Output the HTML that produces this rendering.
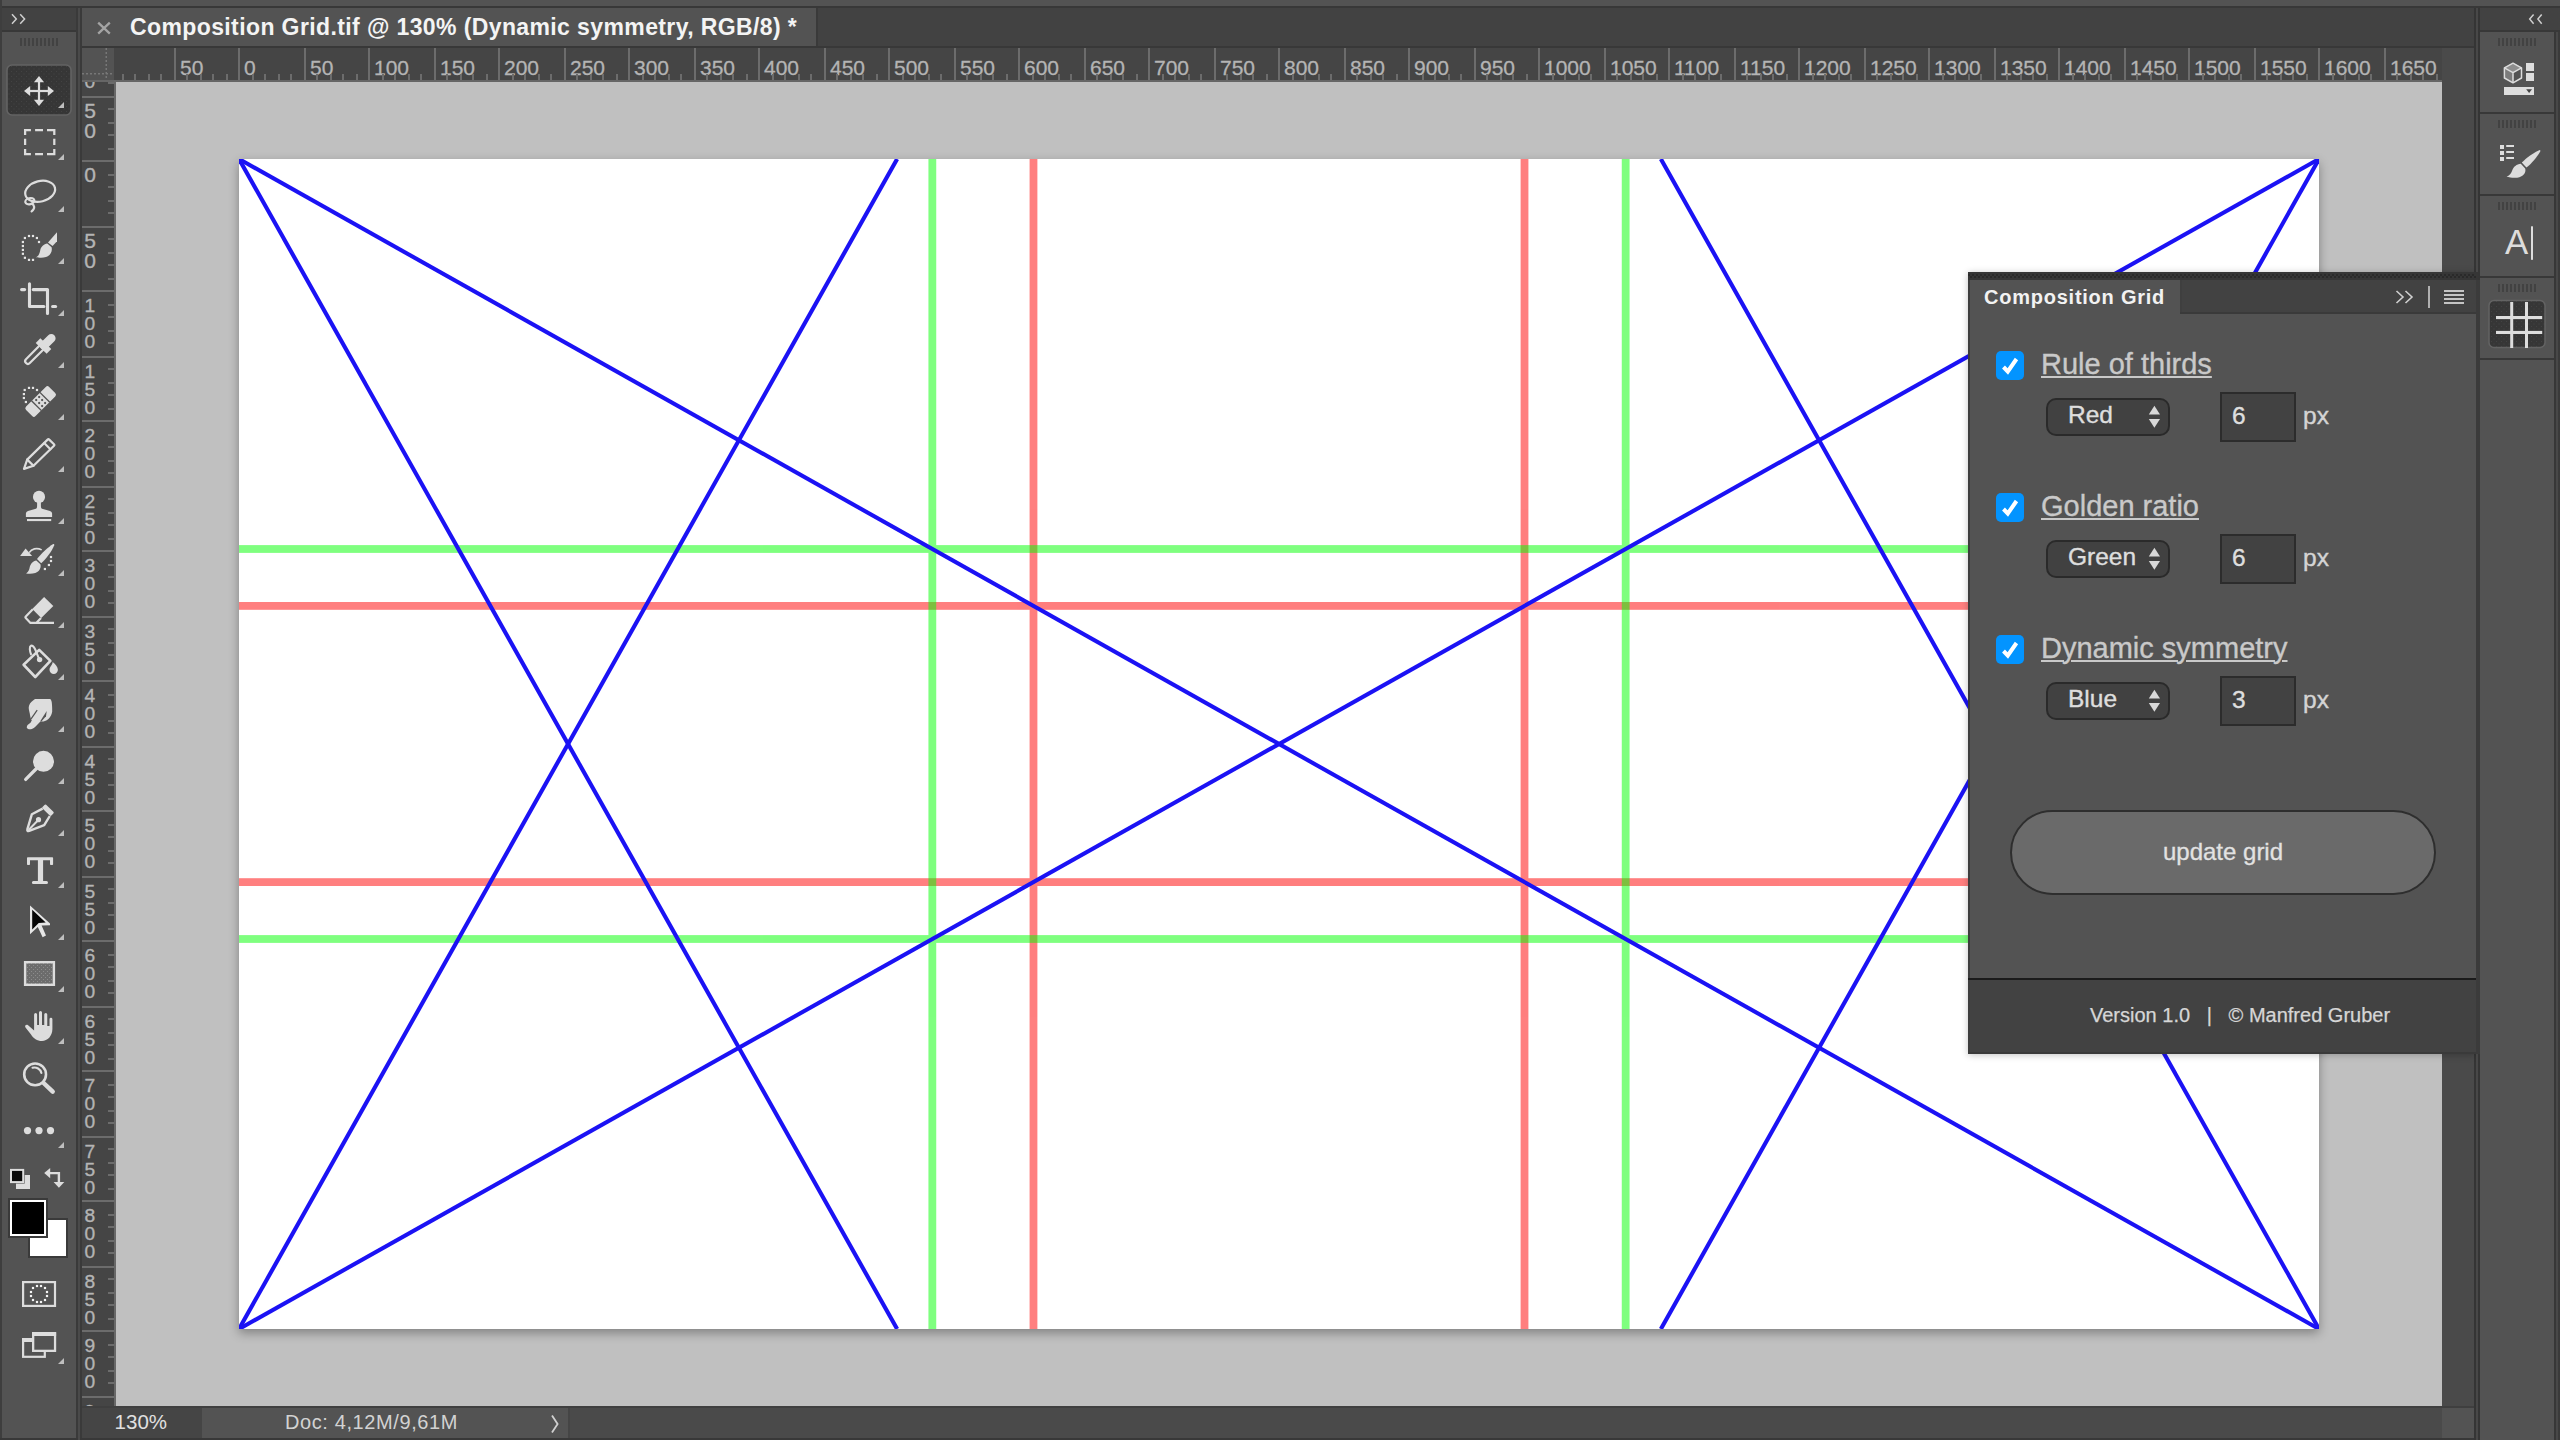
<!DOCTYPE html><html><head><meta charset="utf-8"><title>Composition Grid</title><style>
html,body{margin:0;padding:0;}
body{width:2560px;height:1440px;overflow:hidden;background:#535353;position:relative;font-family:"Liberation Sans",sans-serif;}
div,svg,span{position:absolute;box-sizing:border-box;}
.t{white-space:nowrap;line-height:1;}
svg text{font-family:"Liberation Sans",sans-serif;}
</style></head><body>
<div style="left:0px;top:0px;width:2560px;height:6px;background:#535353;"></div>
<div style="left:0px;top:6px;width:2560px;height:2px;background:#383838;"></div>
<div style="left:0px;top:0px;width:2px;height:8px;background:#3e3e3e;"></div>
<div style="left:0px;top:8px;width:2px;height:1432px;background:#3e3e3e;"></div>
<div style="left:2px;top:8px;width:74px;height:22px;background:#424242;"></div>
<div style="left:2px;top:30px;width:74px;height:2px;background:#383838;"></div>
<div style="left:2px;top:32px;width:74px;height:1408px;background:#535353;"></div>
<div style="left:76px;top:8px;width:2px;height:1432px;background:#3a3a3a;"></div>
<div style="left:78px;top:8px;width:2px;height:1432px;background:#4a4a4a;"></div>
<div style="left:80px;top:8px;width:2px;height:1432px;background:#3a3a3a;"></div>
<div style="left:82px;top:8px;width:2392px;height:38px;background:#424242;"></div>
<div style="left:82px;top:8px;width:734px;height:38px;background:#535353;"></div>
<div style="left:816px;top:8px;width:2px;height:38px;background:#3a3a3a;"></div>
<div style="left:82px;top:46px;width:2392px;height:2px;background:#383838;"></div>
<div style="left:82px;top:48px;width:2360px;height:32px;background:#454545;"></div>
<div style="left:82px;top:48px;width:32px;height:32px;background:#535353;"></div>
<div style="left:82px;top:80px;width:2360px;height:2px;background:#666666;"></div>
<div style="left:82px;top:82px;width:32px;height:1324px;background:#454545;"></div>
<div style="left:114px;top:80px;width:2px;height:1326px;background:#686868;"></div>
<div style="left:116px;top:82px;width:2326px;height:1324px;background:#c0c0c0;"></div>
<div style="left:2442px;top:48px;width:32px;height:1358px;background:#4a4a4a;"></div>
<div style="left:82px;top:1406px;width:2392px;height:2px;background:#3f3f3f;"></div>
<div style="left:82px;top:1408px;width:120px;height:30px;background:#454545;"></div>
<div style="left:202px;top:1408px;width:366px;height:30px;background:#535353;"></div>
<div style="left:568px;top:1408px;width:1874px;height:30px;background:#4a4a4a;"></div>
<div style="left:568px;top:1408px;width:2px;height:30px;background:#454545;"></div>
<div style="left:2442px;top:1408px;width:32px;height:30px;background:#535353;"></div>
<div style="left:0px;top:1438px;width:2560px;height:2px;background:#383838;"></div>
<div style="left:78px;top:1438px;width:2px;height:2px;background:#4a4a4a;"></div>
<div style="left:2476px;top:1438px;width:2px;height:2px;background:#484848;"></div>
<div style="left:2474px;top:8px;width:2px;height:1432px;background:#353535;"></div>
<div style="left:2476px;top:8px;width:2px;height:1432px;background:#484848;"></div>
<div style="left:2478px;top:8px;width:2px;height:1432px;background:#353535;"></div>
<div style="left:2480px;top:8px;width:80px;height:22px;background:#424242;"></div>
<div style="left:2480px;top:30px;width:80px;height:2px;background:#383838;"></div>
<div style="left:2480px;top:32px;width:74px;height:1408px;background:#535353;"></div>
<div style="left:2554px;top:32px;width:2px;height:1408px;background:#373737;"></div>
<div style="left:2556px;top:32px;width:2px;height:1408px;background:#484848;"></div>
<div style="left:2558px;top:32px;width:2px;height:1408px;background:#3a3a3a;"></div>
<div style="left:2480px;top:112px;width:74px;height:2px;background:#383838;"></div>
<div style="left:2480px;top:194px;width:74px;height:2px;background:#383838;"></div>
<div style="left:2480px;top:276px;width:74px;height:2px;background:#383838;"></div>
<div style="left:2480px;top:358px;width:74px;height:2px;background:#383838;"></div>
<svg style="left:116px;top:48px" width="2326" height="32" viewBox="116 48 2326 32"><rect x="122" y="74" width="2" height="6" fill="#6c6c6c"/><rect x="134" y="74" width="2" height="6" fill="#6c6c6c"/><rect x="148" y="74" width="2" height="6" fill="#6c6c6c"/><rect x="160" y="74" width="2" height="6" fill="#6c6c6c"/><rect x="174" y="48" width="2" height="32" fill="#6c6c6c"/><text x="180" y="75" font-size="21" fill="#b4b4b4" stroke="#b4b4b4" stroke-width="0.3">50</text><rect x="186" y="74" width="2" height="6" fill="#6c6c6c"/><rect x="200" y="74" width="2" height="6" fill="#6c6c6c"/><rect x="212" y="74" width="2" height="6" fill="#6c6c6c"/><rect x="226" y="74" width="2" height="6" fill="#6c6c6c"/><rect x="238" y="48" width="2" height="32" fill="#6c6c6c"/><text x="244" y="75" font-size="21" fill="#b4b4b4" stroke="#b4b4b4" stroke-width="0.3">0</text><rect x="252" y="74" width="2" height="6" fill="#6c6c6c"/><rect x="264" y="74" width="2" height="6" fill="#6c6c6c"/><rect x="278" y="74" width="2" height="6" fill="#6c6c6c"/><rect x="290" y="74" width="2" height="6" fill="#6c6c6c"/><rect x="304" y="48" width="2" height="32" fill="#6c6c6c"/><text x="310" y="75" font-size="21" fill="#b4b4b4" stroke="#b4b4b4" stroke-width="0.3">50</text><rect x="316" y="74" width="2" height="6" fill="#6c6c6c"/><rect x="330" y="74" width="2" height="6" fill="#6c6c6c"/><rect x="342" y="74" width="2" height="6" fill="#6c6c6c"/><rect x="356" y="74" width="2" height="6" fill="#6c6c6c"/><rect x="368" y="48" width="2" height="32" fill="#6c6c6c"/><text x="374" y="75" font-size="21" fill="#b4b4b4" stroke="#b4b4b4" stroke-width="0.3">100</text><rect x="382" y="74" width="2" height="6" fill="#6c6c6c"/><rect x="394" y="74" width="2" height="6" fill="#6c6c6c"/><rect x="408" y="74" width="2" height="6" fill="#6c6c6c"/><rect x="420" y="74" width="2" height="6" fill="#6c6c6c"/><rect x="434" y="48" width="2" height="32" fill="#6c6c6c"/><text x="440" y="75" font-size="21" fill="#b4b4b4" stroke="#b4b4b4" stroke-width="0.3">150</text><rect x="446" y="74" width="2" height="6" fill="#6c6c6c"/><rect x="460" y="74" width="2" height="6" fill="#6c6c6c"/><rect x="472" y="74" width="2" height="6" fill="#6c6c6c"/><rect x="486" y="74" width="2" height="6" fill="#6c6c6c"/><rect x="498" y="48" width="2" height="32" fill="#6c6c6c"/><text x="504" y="75" font-size="21" fill="#b4b4b4" stroke="#b4b4b4" stroke-width="0.3">200</text><rect x="512" y="74" width="2" height="6" fill="#6c6c6c"/><rect x="524" y="74" width="2" height="6" fill="#6c6c6c"/><rect x="538" y="74" width="2" height="6" fill="#6c6c6c"/><rect x="550" y="74" width="2" height="6" fill="#6c6c6c"/><rect x="564" y="48" width="2" height="32" fill="#6c6c6c"/><text x="570" y="75" font-size="21" fill="#b4b4b4" stroke="#b4b4b4" stroke-width="0.3">250</text><rect x="576" y="74" width="2" height="6" fill="#6c6c6c"/><rect x="590" y="74" width="2" height="6" fill="#6c6c6c"/><rect x="602" y="74" width="2" height="6" fill="#6c6c6c"/><rect x="616" y="74" width="2" height="6" fill="#6c6c6c"/><rect x="628" y="48" width="2" height="32" fill="#6c6c6c"/><text x="634" y="75" font-size="21" fill="#b4b4b4" stroke="#b4b4b4" stroke-width="0.3">300</text><rect x="642" y="74" width="2" height="6" fill="#6c6c6c"/><rect x="654" y="74" width="2" height="6" fill="#6c6c6c"/><rect x="668" y="74" width="2" height="6" fill="#6c6c6c"/><rect x="680" y="74" width="2" height="6" fill="#6c6c6c"/><rect x="694" y="48" width="2" height="32" fill="#6c6c6c"/><text x="700" y="75" font-size="21" fill="#b4b4b4" stroke="#b4b4b4" stroke-width="0.3">350</text><rect x="706" y="74" width="2" height="6" fill="#6c6c6c"/><rect x="720" y="74" width="2" height="6" fill="#6c6c6c"/><rect x="732" y="74" width="2" height="6" fill="#6c6c6c"/><rect x="746" y="74" width="2" height="6" fill="#6c6c6c"/><rect x="758" y="48" width="2" height="32" fill="#6c6c6c"/><text x="764" y="75" font-size="21" fill="#b4b4b4" stroke="#b4b4b4" stroke-width="0.3">400</text><rect x="772" y="74" width="2" height="6" fill="#6c6c6c"/><rect x="784" y="74" width="2" height="6" fill="#6c6c6c"/><rect x="798" y="74" width="2" height="6" fill="#6c6c6c"/><rect x="810" y="74" width="2" height="6" fill="#6c6c6c"/><rect x="824" y="48" width="2" height="32" fill="#6c6c6c"/><text x="830" y="75" font-size="21" fill="#b4b4b4" stroke="#b4b4b4" stroke-width="0.3">450</text><rect x="836" y="74" width="2" height="6" fill="#6c6c6c"/><rect x="850" y="74" width="2" height="6" fill="#6c6c6c"/><rect x="862" y="74" width="2" height="6" fill="#6c6c6c"/><rect x="876" y="74" width="2" height="6" fill="#6c6c6c"/><rect x="888" y="48" width="2" height="32" fill="#6c6c6c"/><text x="894" y="75" font-size="21" fill="#b4b4b4" stroke="#b4b4b4" stroke-width="0.3">500</text><rect x="902" y="74" width="2" height="6" fill="#6c6c6c"/><rect x="914" y="74" width="2" height="6" fill="#6c6c6c"/><rect x="928" y="74" width="2" height="6" fill="#6c6c6c"/><rect x="940" y="74" width="2" height="6" fill="#6c6c6c"/><rect x="954" y="48" width="2" height="32" fill="#6c6c6c"/><text x="960" y="75" font-size="21" fill="#b4b4b4" stroke="#b4b4b4" stroke-width="0.3">550</text><rect x="966" y="74" width="2" height="6" fill="#6c6c6c"/><rect x="980" y="74" width="2" height="6" fill="#6c6c6c"/><rect x="992" y="74" width="2" height="6" fill="#6c6c6c"/><rect x="1006" y="74" width="2" height="6" fill="#6c6c6c"/><rect x="1018" y="48" width="2" height="32" fill="#6c6c6c"/><text x="1024" y="75" font-size="21" fill="#b4b4b4" stroke="#b4b4b4" stroke-width="0.3">600</text><rect x="1032" y="74" width="2" height="6" fill="#6c6c6c"/><rect x="1044" y="74" width="2" height="6" fill="#6c6c6c"/><rect x="1058" y="74" width="2" height="6" fill="#6c6c6c"/><rect x="1070" y="74" width="2" height="6" fill="#6c6c6c"/><rect x="1084" y="48" width="2" height="32" fill="#6c6c6c"/><text x="1090" y="75" font-size="21" fill="#b4b4b4" stroke="#b4b4b4" stroke-width="0.3">650</text><rect x="1096" y="74" width="2" height="6" fill="#6c6c6c"/><rect x="1110" y="74" width="2" height="6" fill="#6c6c6c"/><rect x="1122" y="74" width="2" height="6" fill="#6c6c6c"/><rect x="1136" y="74" width="2" height="6" fill="#6c6c6c"/><rect x="1148" y="48" width="2" height="32" fill="#6c6c6c"/><text x="1154" y="75" font-size="21" fill="#b4b4b4" stroke="#b4b4b4" stroke-width="0.3">700</text><rect x="1162" y="74" width="2" height="6" fill="#6c6c6c"/><rect x="1174" y="74" width="2" height="6" fill="#6c6c6c"/><rect x="1188" y="74" width="2" height="6" fill="#6c6c6c"/><rect x="1200" y="74" width="2" height="6" fill="#6c6c6c"/><rect x="1214" y="48" width="2" height="32" fill="#6c6c6c"/><text x="1220" y="75" font-size="21" fill="#b4b4b4" stroke="#b4b4b4" stroke-width="0.3">750</text><rect x="1226" y="74" width="2" height="6" fill="#6c6c6c"/><rect x="1240" y="74" width="2" height="6" fill="#6c6c6c"/><rect x="1252" y="74" width="2" height="6" fill="#6c6c6c"/><rect x="1266" y="74" width="2" height="6" fill="#6c6c6c"/><rect x="1278" y="48" width="2" height="32" fill="#6c6c6c"/><text x="1284" y="75" font-size="21" fill="#b4b4b4" stroke="#b4b4b4" stroke-width="0.3">800</text><rect x="1292" y="74" width="2" height="6" fill="#6c6c6c"/><rect x="1304" y="74" width="2" height="6" fill="#6c6c6c"/><rect x="1318" y="74" width="2" height="6" fill="#6c6c6c"/><rect x="1330" y="74" width="2" height="6" fill="#6c6c6c"/><rect x="1344" y="48" width="2" height="32" fill="#6c6c6c"/><text x="1350" y="75" font-size="21" fill="#b4b4b4" stroke="#b4b4b4" stroke-width="0.3">850</text><rect x="1356" y="74" width="2" height="6" fill="#6c6c6c"/><rect x="1370" y="74" width="2" height="6" fill="#6c6c6c"/><rect x="1382" y="74" width="2" height="6" fill="#6c6c6c"/><rect x="1396" y="74" width="2" height="6" fill="#6c6c6c"/><rect x="1408" y="48" width="2" height="32" fill="#6c6c6c"/><text x="1414" y="75" font-size="21" fill="#b4b4b4" stroke="#b4b4b4" stroke-width="0.3">900</text><rect x="1422" y="74" width="2" height="6" fill="#6c6c6c"/><rect x="1434" y="74" width="2" height="6" fill="#6c6c6c"/><rect x="1448" y="74" width="2" height="6" fill="#6c6c6c"/><rect x="1460" y="74" width="2" height="6" fill="#6c6c6c"/><rect x="1474" y="48" width="2" height="32" fill="#6c6c6c"/><text x="1480" y="75" font-size="21" fill="#b4b4b4" stroke="#b4b4b4" stroke-width="0.3">950</text><rect x="1486" y="74" width="2" height="6" fill="#6c6c6c"/><rect x="1500" y="74" width="2" height="6" fill="#6c6c6c"/><rect x="1512" y="74" width="2" height="6" fill="#6c6c6c"/><rect x="1526" y="74" width="2" height="6" fill="#6c6c6c"/><rect x="1538" y="48" width="2" height="32" fill="#6c6c6c"/><text x="1544" y="75" font-size="21" fill="#b4b4b4" stroke="#b4b4b4" stroke-width="0.3">1000</text><rect x="1552" y="74" width="2" height="6" fill="#6c6c6c"/><rect x="1564" y="74" width="2" height="6" fill="#6c6c6c"/><rect x="1578" y="74" width="2" height="6" fill="#6c6c6c"/><rect x="1590" y="74" width="2" height="6" fill="#6c6c6c"/><rect x="1604" y="48" width="2" height="32" fill="#6c6c6c"/><text x="1610" y="75" font-size="21" fill="#b4b4b4" stroke="#b4b4b4" stroke-width="0.3">1050</text><rect x="1616" y="74" width="2" height="6" fill="#6c6c6c"/><rect x="1630" y="74" width="2" height="6" fill="#6c6c6c"/><rect x="1642" y="74" width="2" height="6" fill="#6c6c6c"/><rect x="1656" y="74" width="2" height="6" fill="#6c6c6c"/><rect x="1668" y="48" width="2" height="32" fill="#6c6c6c"/><text x="1674" y="75" font-size="21" fill="#b4b4b4" stroke="#b4b4b4" stroke-width="0.3">1100</text><rect x="1682" y="74" width="2" height="6" fill="#6c6c6c"/><rect x="1694" y="74" width="2" height="6" fill="#6c6c6c"/><rect x="1708" y="74" width="2" height="6" fill="#6c6c6c"/><rect x="1720" y="74" width="2" height="6" fill="#6c6c6c"/><rect x="1734" y="48" width="2" height="32" fill="#6c6c6c"/><text x="1740" y="75" font-size="21" fill="#b4b4b4" stroke="#b4b4b4" stroke-width="0.3">1150</text><rect x="1746" y="74" width="2" height="6" fill="#6c6c6c"/><rect x="1760" y="74" width="2" height="6" fill="#6c6c6c"/><rect x="1772" y="74" width="2" height="6" fill="#6c6c6c"/><rect x="1786" y="74" width="2" height="6" fill="#6c6c6c"/><rect x="1798" y="48" width="2" height="32" fill="#6c6c6c"/><text x="1804" y="75" font-size="21" fill="#b4b4b4" stroke="#b4b4b4" stroke-width="0.3">1200</text><rect x="1812" y="74" width="2" height="6" fill="#6c6c6c"/><rect x="1824" y="74" width="2" height="6" fill="#6c6c6c"/><rect x="1838" y="74" width="2" height="6" fill="#6c6c6c"/><rect x="1850" y="74" width="2" height="6" fill="#6c6c6c"/><rect x="1864" y="48" width="2" height="32" fill="#6c6c6c"/><text x="1870" y="75" font-size="21" fill="#b4b4b4" stroke="#b4b4b4" stroke-width="0.3">1250</text><rect x="1876" y="74" width="2" height="6" fill="#6c6c6c"/><rect x="1890" y="74" width="2" height="6" fill="#6c6c6c"/><rect x="1902" y="74" width="2" height="6" fill="#6c6c6c"/><rect x="1916" y="74" width="2" height="6" fill="#6c6c6c"/><rect x="1928" y="48" width="2" height="32" fill="#6c6c6c"/><text x="1934" y="75" font-size="21" fill="#b4b4b4" stroke="#b4b4b4" stroke-width="0.3">1300</text><rect x="1942" y="74" width="2" height="6" fill="#6c6c6c"/><rect x="1954" y="74" width="2" height="6" fill="#6c6c6c"/><rect x="1968" y="74" width="2" height="6" fill="#6c6c6c"/><rect x="1980" y="74" width="2" height="6" fill="#6c6c6c"/><rect x="1994" y="48" width="2" height="32" fill="#6c6c6c"/><text x="2000" y="75" font-size="21" fill="#b4b4b4" stroke="#b4b4b4" stroke-width="0.3">1350</text><rect x="2006" y="74" width="2" height="6" fill="#6c6c6c"/><rect x="2020" y="74" width="2" height="6" fill="#6c6c6c"/><rect x="2032" y="74" width="2" height="6" fill="#6c6c6c"/><rect x="2046" y="74" width="2" height="6" fill="#6c6c6c"/><rect x="2058" y="48" width="2" height="32" fill="#6c6c6c"/><text x="2064" y="75" font-size="21" fill="#b4b4b4" stroke="#b4b4b4" stroke-width="0.3">1400</text><rect x="2072" y="74" width="2" height="6" fill="#6c6c6c"/><rect x="2084" y="74" width="2" height="6" fill="#6c6c6c"/><rect x="2098" y="74" width="2" height="6" fill="#6c6c6c"/><rect x="2110" y="74" width="2" height="6" fill="#6c6c6c"/><rect x="2124" y="48" width="2" height="32" fill="#6c6c6c"/><text x="2130" y="75" font-size="21" fill="#b4b4b4" stroke="#b4b4b4" stroke-width="0.3">1450</text><rect x="2136" y="74" width="2" height="6" fill="#6c6c6c"/><rect x="2150" y="74" width="2" height="6" fill="#6c6c6c"/><rect x="2162" y="74" width="2" height="6" fill="#6c6c6c"/><rect x="2176" y="74" width="2" height="6" fill="#6c6c6c"/><rect x="2188" y="48" width="2" height="32" fill="#6c6c6c"/><text x="2194" y="75" font-size="21" fill="#b4b4b4" stroke="#b4b4b4" stroke-width="0.3">1500</text><rect x="2202" y="74" width="2" height="6" fill="#6c6c6c"/><rect x="2214" y="74" width="2" height="6" fill="#6c6c6c"/><rect x="2228" y="74" width="2" height="6" fill="#6c6c6c"/><rect x="2240" y="74" width="2" height="6" fill="#6c6c6c"/><rect x="2254" y="48" width="2" height="32" fill="#6c6c6c"/><text x="2260" y="75" font-size="21" fill="#b4b4b4" stroke="#b4b4b4" stroke-width="0.3">1550</text><rect x="2266" y="74" width="2" height="6" fill="#6c6c6c"/><rect x="2280" y="74" width="2" height="6" fill="#6c6c6c"/><rect x="2292" y="74" width="2" height="6" fill="#6c6c6c"/><rect x="2306" y="74" width="2" height="6" fill="#6c6c6c"/><rect x="2318" y="48" width="2" height="32" fill="#6c6c6c"/><text x="2324" y="75" font-size="21" fill="#b4b4b4" stroke="#b4b4b4" stroke-width="0.3">1600</text><rect x="2332" y="74" width="2" height="6" fill="#6c6c6c"/><rect x="2344" y="74" width="2" height="6" fill="#6c6c6c"/><rect x="2358" y="74" width="2" height="6" fill="#6c6c6c"/><rect x="2370" y="74" width="2" height="6" fill="#6c6c6c"/><rect x="2384" y="48" width="2" height="32" fill="#6c6c6c"/><text x="2390" y="75" font-size="21" fill="#b4b4b4" stroke="#b4b4b4" stroke-width="0.3">1650</text><rect x="2396" y="74" width="2" height="6" fill="#6c6c6c"/><rect x="2410" y="74" width="2" height="6" fill="#6c6c6c"/><rect x="2422" y="74" width="2" height="6" fill="#6c6c6c"/><rect x="2436" y="74" width="2" height="6" fill="#6c6c6c"/></svg>
<svg style="left:82px;top:48px" width="32" height="32" viewBox="82 48 32 32"><line x1="106.25" y1="48" x2="106.25" y2="80" stroke="#777" stroke-width="1.5" stroke-dasharray="2 2"/><line x1="82" y1="73.8" x2="112" y2="73.8" stroke="#777" stroke-width="1.5" stroke-dasharray="2 2"/></svg>
<svg style="left:82px;top:82px" width="32" height="1324" viewBox="82 82 32 1324"><rect x="82" y="30" width="32" height="2" fill="#6c6c6c"/><text x="84.6" y="51.9" font-size="19.2" fill="#b4b4b4" stroke="#b4b4b4" stroke-width="0.35">1</text><text x="84.6" y="69.7" font-size="19.2" fill="#b4b4b4" stroke="#b4b4b4" stroke-width="0.35">0</text><text x="84.6" y="87.5" font-size="19.2" fill="#b4b4b4" stroke="#b4b4b4" stroke-width="0.35">0</text><rect x="108" y="44" width="6" height="2" fill="#6c6c6c"/><rect x="108" y="56" width="6" height="2" fill="#6c6c6c"/><rect x="108" y="70" width="6" height="2" fill="#6c6c6c"/><rect x="108" y="82" width="6" height="2" fill="#6c6c6c"/><rect x="82" y="96" width="32" height="2" fill="#6c6c6c"/><text x="84.3" y="118.3" font-size="21" fill="#b4b4b4" stroke="#b4b4b4" stroke-width="0.35">5</text><text x="84.3" y="138.3" font-size="21" fill="#b4b4b4" stroke="#b4b4b4" stroke-width="0.35">0</text><rect x="108" y="108" width="6" height="2" fill="#6c6c6c"/><rect x="108" y="122" width="6" height="2" fill="#6c6c6c"/><rect x="108" y="134" width="6" height="2" fill="#6c6c6c"/><rect x="108" y="148" width="6" height="2" fill="#6c6c6c"/><rect x="82" y="160" width="32" height="2" fill="#6c6c6c"/><text x="84.3" y="182.3" font-size="21" fill="#b4b4b4" stroke="#b4b4b4" stroke-width="0.35">0</text><rect x="108" y="174" width="6" height="2" fill="#6c6c6c"/><rect x="108" y="186" width="6" height="2" fill="#6c6c6c"/><rect x="108" y="200" width="6" height="2" fill="#6c6c6c"/><rect x="108" y="212" width="6" height="2" fill="#6c6c6c"/><rect x="82" y="226" width="32" height="2" fill="#6c6c6c"/><text x="84.3" y="248.3" font-size="21" fill="#b4b4b4" stroke="#b4b4b4" stroke-width="0.35">5</text><text x="84.3" y="268.3" font-size="21" fill="#b4b4b4" stroke="#b4b4b4" stroke-width="0.35">0</text><rect x="108" y="238" width="6" height="2" fill="#6c6c6c"/><rect x="108" y="252" width="6" height="2" fill="#6c6c6c"/><rect x="108" y="264" width="6" height="2" fill="#6c6c6c"/><rect x="108" y="278" width="6" height="2" fill="#6c6c6c"/><rect x="82" y="290" width="32" height="2" fill="#6c6c6c"/><text x="84.6" y="311.9" font-size="19.2" fill="#b4b4b4" stroke="#b4b4b4" stroke-width="0.35">1</text><text x="84.6" y="329.7" font-size="19.2" fill="#b4b4b4" stroke="#b4b4b4" stroke-width="0.35">0</text><text x="84.6" y="347.5" font-size="19.2" fill="#b4b4b4" stroke="#b4b4b4" stroke-width="0.35">0</text><rect x="108" y="304" width="6" height="2" fill="#6c6c6c"/><rect x="108" y="316" width="6" height="2" fill="#6c6c6c"/><rect x="108" y="330" width="6" height="2" fill="#6c6c6c"/><rect x="108" y="342" width="6" height="2" fill="#6c6c6c"/><rect x="82" y="356" width="32" height="2" fill="#6c6c6c"/><text x="84.6" y="377.9" font-size="19.2" fill="#b4b4b4" stroke="#b4b4b4" stroke-width="0.35">1</text><text x="84.6" y="395.7" font-size="19.2" fill="#b4b4b4" stroke="#b4b4b4" stroke-width="0.35">5</text><text x="84.6" y="413.5" font-size="19.2" fill="#b4b4b4" stroke="#b4b4b4" stroke-width="0.35">0</text><rect x="108" y="368" width="6" height="2" fill="#6c6c6c"/><rect x="108" y="382" width="6" height="2" fill="#6c6c6c"/><rect x="108" y="394" width="6" height="2" fill="#6c6c6c"/><rect x="108" y="408" width="6" height="2" fill="#6c6c6c"/><rect x="82" y="420" width="32" height="2" fill="#6c6c6c"/><text x="84.6" y="441.9" font-size="19.2" fill="#b4b4b4" stroke="#b4b4b4" stroke-width="0.35">2</text><text x="84.6" y="459.7" font-size="19.2" fill="#b4b4b4" stroke="#b4b4b4" stroke-width="0.35">0</text><text x="84.6" y="477.5" font-size="19.2" fill="#b4b4b4" stroke="#b4b4b4" stroke-width="0.35">0</text><rect x="108" y="434" width="6" height="2" fill="#6c6c6c"/><rect x="108" y="446" width="6" height="2" fill="#6c6c6c"/><rect x="108" y="460" width="6" height="2" fill="#6c6c6c"/><rect x="108" y="472" width="6" height="2" fill="#6c6c6c"/><rect x="82" y="486" width="32" height="2" fill="#6c6c6c"/><text x="84.6" y="507.9" font-size="19.2" fill="#b4b4b4" stroke="#b4b4b4" stroke-width="0.35">2</text><text x="84.6" y="525.7" font-size="19.2" fill="#b4b4b4" stroke="#b4b4b4" stroke-width="0.35">5</text><text x="84.6" y="543.5" font-size="19.2" fill="#b4b4b4" stroke="#b4b4b4" stroke-width="0.35">0</text><rect x="108" y="498" width="6" height="2" fill="#6c6c6c"/><rect x="108" y="512" width="6" height="2" fill="#6c6c6c"/><rect x="108" y="524" width="6" height="2" fill="#6c6c6c"/><rect x="108" y="538" width="6" height="2" fill="#6c6c6c"/><rect x="82" y="550" width="32" height="2" fill="#6c6c6c"/><text x="84.6" y="571.9" font-size="19.2" fill="#b4b4b4" stroke="#b4b4b4" stroke-width="0.35">3</text><text x="84.6" y="589.7" font-size="19.2" fill="#b4b4b4" stroke="#b4b4b4" stroke-width="0.35">0</text><text x="84.6" y="607.5" font-size="19.2" fill="#b4b4b4" stroke="#b4b4b4" stroke-width="0.35">0</text><rect x="108" y="564" width="6" height="2" fill="#6c6c6c"/><rect x="108" y="576" width="6" height="2" fill="#6c6c6c"/><rect x="108" y="590" width="6" height="2" fill="#6c6c6c"/><rect x="108" y="602" width="6" height="2" fill="#6c6c6c"/><rect x="82" y="616" width="32" height="2" fill="#6c6c6c"/><text x="84.6" y="637.9" font-size="19.2" fill="#b4b4b4" stroke="#b4b4b4" stroke-width="0.35">3</text><text x="84.6" y="655.7" font-size="19.2" fill="#b4b4b4" stroke="#b4b4b4" stroke-width="0.35">5</text><text x="84.6" y="673.5" font-size="19.2" fill="#b4b4b4" stroke="#b4b4b4" stroke-width="0.35">0</text><rect x="108" y="628" width="6" height="2" fill="#6c6c6c"/><rect x="108" y="642" width="6" height="2" fill="#6c6c6c"/><rect x="108" y="654" width="6" height="2" fill="#6c6c6c"/><rect x="108" y="668" width="6" height="2" fill="#6c6c6c"/><rect x="82" y="680" width="32" height="2" fill="#6c6c6c"/><text x="84.6" y="701.9" font-size="19.2" fill="#b4b4b4" stroke="#b4b4b4" stroke-width="0.35">4</text><text x="84.6" y="719.7" font-size="19.2" fill="#b4b4b4" stroke="#b4b4b4" stroke-width="0.35">0</text><text x="84.6" y="737.5" font-size="19.2" fill="#b4b4b4" stroke="#b4b4b4" stroke-width="0.35">0</text><rect x="108" y="694" width="6" height="2" fill="#6c6c6c"/><rect x="108" y="706" width="6" height="2" fill="#6c6c6c"/><rect x="108" y="720" width="6" height="2" fill="#6c6c6c"/><rect x="108" y="732" width="6" height="2" fill="#6c6c6c"/><rect x="82" y="746" width="32" height="2" fill="#6c6c6c"/><text x="84.6" y="767.9" font-size="19.2" fill="#b4b4b4" stroke="#b4b4b4" stroke-width="0.35">4</text><text x="84.6" y="785.7" font-size="19.2" fill="#b4b4b4" stroke="#b4b4b4" stroke-width="0.35">5</text><text x="84.6" y="803.5" font-size="19.2" fill="#b4b4b4" stroke="#b4b4b4" stroke-width="0.35">0</text><rect x="108" y="758" width="6" height="2" fill="#6c6c6c"/><rect x="108" y="772" width="6" height="2" fill="#6c6c6c"/><rect x="108" y="784" width="6" height="2" fill="#6c6c6c"/><rect x="108" y="798" width="6" height="2" fill="#6c6c6c"/><rect x="82" y="810" width="32" height="2" fill="#6c6c6c"/><text x="84.6" y="831.9" font-size="19.2" fill="#b4b4b4" stroke="#b4b4b4" stroke-width="0.35">5</text><text x="84.6" y="849.7" font-size="19.2" fill="#b4b4b4" stroke="#b4b4b4" stroke-width="0.35">0</text><text x="84.6" y="867.5" font-size="19.2" fill="#b4b4b4" stroke="#b4b4b4" stroke-width="0.35">0</text><rect x="108" y="824" width="6" height="2" fill="#6c6c6c"/><rect x="108" y="836" width="6" height="2" fill="#6c6c6c"/><rect x="108" y="850" width="6" height="2" fill="#6c6c6c"/><rect x="108" y="862" width="6" height="2" fill="#6c6c6c"/><rect x="82" y="876" width="32" height="2" fill="#6c6c6c"/><text x="84.6" y="897.9" font-size="19.2" fill="#b4b4b4" stroke="#b4b4b4" stroke-width="0.35">5</text><text x="84.6" y="915.7" font-size="19.2" fill="#b4b4b4" stroke="#b4b4b4" stroke-width="0.35">5</text><text x="84.6" y="933.5" font-size="19.2" fill="#b4b4b4" stroke="#b4b4b4" stroke-width="0.35">0</text><rect x="108" y="888" width="6" height="2" fill="#6c6c6c"/><rect x="108" y="902" width="6" height="2" fill="#6c6c6c"/><rect x="108" y="914" width="6" height="2" fill="#6c6c6c"/><rect x="108" y="928" width="6" height="2" fill="#6c6c6c"/><rect x="82" y="940" width="32" height="2" fill="#6c6c6c"/><text x="84.6" y="961.9" font-size="19.2" fill="#b4b4b4" stroke="#b4b4b4" stroke-width="0.35">6</text><text x="84.6" y="979.7" font-size="19.2" fill="#b4b4b4" stroke="#b4b4b4" stroke-width="0.35">0</text><text x="84.6" y="997.5" font-size="19.2" fill="#b4b4b4" stroke="#b4b4b4" stroke-width="0.35">0</text><rect x="108" y="954" width="6" height="2" fill="#6c6c6c"/><rect x="108" y="966" width="6" height="2" fill="#6c6c6c"/><rect x="108" y="980" width="6" height="2" fill="#6c6c6c"/><rect x="108" y="992" width="6" height="2" fill="#6c6c6c"/><rect x="82" y="1006" width="32" height="2" fill="#6c6c6c"/><text x="84.6" y="1027.9" font-size="19.2" fill="#b4b4b4" stroke="#b4b4b4" stroke-width="0.35">6</text><text x="84.6" y="1045.7" font-size="19.2" fill="#b4b4b4" stroke="#b4b4b4" stroke-width="0.35">5</text><text x="84.6" y="1063.5" font-size="19.2" fill="#b4b4b4" stroke="#b4b4b4" stroke-width="0.35">0</text><rect x="108" y="1018" width="6" height="2" fill="#6c6c6c"/><rect x="108" y="1032" width="6" height="2" fill="#6c6c6c"/><rect x="108" y="1044" width="6" height="2" fill="#6c6c6c"/><rect x="108" y="1058" width="6" height="2" fill="#6c6c6c"/><rect x="82" y="1070" width="32" height="2" fill="#6c6c6c"/><text x="84.6" y="1091.9" font-size="19.2" fill="#b4b4b4" stroke="#b4b4b4" stroke-width="0.35">7</text><text x="84.6" y="1109.7" font-size="19.2" fill="#b4b4b4" stroke="#b4b4b4" stroke-width="0.35">0</text><text x="84.6" y="1127.5" font-size="19.2" fill="#b4b4b4" stroke="#b4b4b4" stroke-width="0.35">0</text><rect x="108" y="1084" width="6" height="2" fill="#6c6c6c"/><rect x="108" y="1096" width="6" height="2" fill="#6c6c6c"/><rect x="108" y="1110" width="6" height="2" fill="#6c6c6c"/><rect x="108" y="1122" width="6" height="2" fill="#6c6c6c"/><rect x="82" y="1136" width="32" height="2" fill="#6c6c6c"/><text x="84.6" y="1157.9" font-size="19.2" fill="#b4b4b4" stroke="#b4b4b4" stroke-width="0.35">7</text><text x="84.6" y="1175.7" font-size="19.2" fill="#b4b4b4" stroke="#b4b4b4" stroke-width="0.35">5</text><text x="84.6" y="1193.5" font-size="19.2" fill="#b4b4b4" stroke="#b4b4b4" stroke-width="0.35">0</text><rect x="108" y="1148" width="6" height="2" fill="#6c6c6c"/><rect x="108" y="1162" width="6" height="2" fill="#6c6c6c"/><rect x="108" y="1174" width="6" height="2" fill="#6c6c6c"/><rect x="108" y="1188" width="6" height="2" fill="#6c6c6c"/><rect x="82" y="1200" width="32" height="2" fill="#6c6c6c"/><text x="84.6" y="1221.9" font-size="19.2" fill="#b4b4b4" stroke="#b4b4b4" stroke-width="0.35">8</text><text x="84.6" y="1239.7" font-size="19.2" fill="#b4b4b4" stroke="#b4b4b4" stroke-width="0.35">0</text><text x="84.6" y="1257.5" font-size="19.2" fill="#b4b4b4" stroke="#b4b4b4" stroke-width="0.35">0</text><rect x="108" y="1214" width="6" height="2" fill="#6c6c6c"/><rect x="108" y="1226" width="6" height="2" fill="#6c6c6c"/><rect x="108" y="1240" width="6" height="2" fill="#6c6c6c"/><rect x="108" y="1252" width="6" height="2" fill="#6c6c6c"/><rect x="82" y="1266" width="32" height="2" fill="#6c6c6c"/><text x="84.6" y="1287.9" font-size="19.2" fill="#b4b4b4" stroke="#b4b4b4" stroke-width="0.35">8</text><text x="84.6" y="1305.7" font-size="19.2" fill="#b4b4b4" stroke="#b4b4b4" stroke-width="0.35">5</text><text x="84.6" y="1323.5" font-size="19.2" fill="#b4b4b4" stroke="#b4b4b4" stroke-width="0.35">0</text><rect x="108" y="1278" width="6" height="2" fill="#6c6c6c"/><rect x="108" y="1292" width="6" height="2" fill="#6c6c6c"/><rect x="108" y="1304" width="6" height="2" fill="#6c6c6c"/><rect x="108" y="1318" width="6" height="2" fill="#6c6c6c"/><rect x="82" y="1330" width="32" height="2" fill="#6c6c6c"/><text x="84.6" y="1351.9" font-size="19.2" fill="#b4b4b4" stroke="#b4b4b4" stroke-width="0.35">9</text><text x="84.6" y="1369.7" font-size="19.2" fill="#b4b4b4" stroke="#b4b4b4" stroke-width="0.35">0</text><text x="84.6" y="1387.5" font-size="19.2" fill="#b4b4b4" stroke="#b4b4b4" stroke-width="0.35">0</text><rect x="108" y="1344" width="6" height="2" fill="#6c6c6c"/><rect x="108" y="1356" width="6" height="2" fill="#6c6c6c"/><rect x="108" y="1370" width="6" height="2" fill="#6c6c6c"/><rect x="108" y="1382" width="6" height="2" fill="#6c6c6c"/><rect x="82" y="1396" width="32" height="2" fill="#6c6c6c"/><text x="84.6" y="1417.9" font-size="19.2" fill="#b4b4b4" stroke="#b4b4b4" stroke-width="0.35">9</text><text x="84.6" y="1435.7" font-size="19.2" fill="#b4b4b4" stroke="#b4b4b4" stroke-width="0.35">5</text><text x="84.6" y="1453.5" font-size="19.2" fill="#b4b4b4" stroke="#b4b4b4" stroke-width="0.35">0</text></svg>
<div style="left:239px;top:159px;width:2080px;height:1170px;background:#fff;box-shadow:0 3.5px 10px rgba(0,0,0,0.33);"></div>
<svg style="left:239px;top:159px" width="2080" height="1170" viewBox="0 0 2080 1170"><g opacity="0.5" fill="#ff0000"><rect x="790.59" y="0" width="7.8" height="1170"/><rect x="0" y="443.00" width="2080" height="7.8"/><rect x="1281.61" y="0" width="7.8" height="1170"/><rect x="0" y="719.20" width="2080" height="7.8"/></g><g opacity="0.5" fill="#00ff00"><rect x="689.43" y="0" width="7.8" height="1170"/><rect x="0" y="386.10" width="2080" height="7.8"/><rect x="1382.77" y="0" width="7.8" height="1170"/><rect x="0" y="776.10" width="2080" height="7.8"/></g><g stroke="#1b12f4" stroke-width="4.1" stroke-linecap="butt" fill="none"><line x1="0.00" y1="0" x2="2080.00" y2="1170"/><line x1="0.00" y1="1170" x2="2080.00" y2="0"/><line x1="0.00" y1="0" x2="658.12" y2="1170"/><line x1="0.00" y1="1170" x2="658.12" y2="0"/><line x1="2080.00" y1="0" x2="1421.88" y2="1170"/><line x1="2080.00" y1="1170" x2="1421.88" y2="0"/></g></svg>
<svg style="left:0px;top:8px" width="76" height="1432" viewBox="0 8 76 1432"><g fill="none" stroke="#cfcfcf" stroke-width="1.5"><polyline points="12,14.3 16.3,19 12,23.7"/><polyline points="20.2,14.3 24.6,19 20.2,23.7"/></g><rect x="20" y="38" width="2" height="8" fill="#424242"/><rect x="24" y="38" width="2" height="8" fill="#424242"/><rect x="28" y="38" width="2" height="8" fill="#424242"/><rect x="32" y="38" width="2" height="8" fill="#424242"/><rect x="36" y="38" width="2" height="8" fill="#424242"/><rect x="40" y="38" width="2" height="8" fill="#424242"/><rect x="44" y="38" width="2" height="8" fill="#424242"/><rect x="48" y="38" width="2" height="8" fill="#424242"/><rect x="52" y="38" width="2" height="8" fill="#424242"/><rect x="56" y="38" width="2" height="8" fill="#424242"/><defs><pattern id="bp" width="5" height="5" patternUnits="userSpaceOnUse"><rect width="5" height="5" fill="#363636"/><rect x="1" y="1" width="1" height="1" fill="#434343"/><rect x="3.5" y="3.5" width="1" height="1" fill="#434343"/></pattern></defs><rect x="7" y="65" width="64" height="50" rx="5" fill="url(#bp)" stroke="#636363" stroke-width="1.6"/><path d="M64 102 V108 H58 Z" fill="#bebebe"/><path d="M64 154 V160 H58 Z" fill="#bebebe"/><path d="M64 206 V212 H58 Z" fill="#bebebe"/><path d="M64 258 V264 H58 Z" fill="#bebebe"/><path d="M64 310 V316 H58 Z" fill="#bebebe"/><path d="M64 362 V368 H58 Z" fill="#bebebe"/><path d="M64 414 V420 H58 Z" fill="#bebebe"/><path d="M64 466 V472 H58 Z" fill="#bebebe"/><path d="M64 518 V524 H58 Z" fill="#bebebe"/><path d="M64 570 V576 H58 Z" fill="#bebebe"/><path d="M64 622 V628 H58 Z" fill="#bebebe"/><path d="M64 674 V680 H58 Z" fill="#bebebe"/><path d="M64 726 V732 H58 Z" fill="#bebebe"/><path d="M64 778 V784 H58 Z" fill="#bebebe"/><path d="M64 830 V836 H58 Z" fill="#bebebe"/><path d="M64 882 V888 H58 Z" fill="#bebebe"/><path d="M64 934 V940 H58 Z" fill="#bebebe"/><path d="M64 986 V992 H58 Z" fill="#bebebe"/><path d="M64 1038 V1044 H58 Z" fill="#bebebe"/><path d="M64 1142 V1148 H58 Z" fill="#bebebe"/><path d="M64 1358 V1364 H58 Z" fill="#bebebe"/><g fill="#dddddd"><rect x="37.9" y="80" width="2.2" height="22"/><rect x="28" y="89.9" width="22" height="2.2"/><path d="M39 76.1 L44.1 82.2 H33.9 Z"/><path d="M39 105.9 L44.1 99.8 H33.9 Z"/><path d="M24 91 L30.2 85.9 V96.1 Z"/><path d="M54 91 L47.8 85.9 V96.1 Z"/></g><g fill="none" stroke="#dddddd" stroke-width="2.25"><path d="M25.1 134.9 V130.1 H30.9 M35.1 130.1 H43 M47 130.1 H54.3 V134.9 M54.3 138.8 V145.1 M54.3 149.1 V154 H47 M43 154 H35.1 M30.9 154 H25.1 V149.1 M25.1 145.1 V138.8"/></g><g fill="none" stroke="#dddddd" stroke-width="2.2" stroke-linecap="round"><ellipse cx="40.2" cy="191.3" rx="15.2" ry="10.2" transform="rotate(-14 40.2 191.5)"/><ellipse cx="29.8" cy="201.2" rx="4.6" ry="3" transform="rotate(-14 29.8 201.2)"/><path d="M31.5 203.6 C34.5 205, 35.5 208.5, 31.6 211.3"/></g><g fill="#e4e4e4"><rect x="27.9" y="234.9" width="2.2" height="2.2"/><rect x="31.9" y="234.9" width="2.2" height="2.2"/><rect x="23.8" y="236.9" width="2.2" height="2.2"/><rect x="35.8" y="236.9" width="2.2" height="2.2"/><rect x="21.8" y="240.9" width="2.2" height="2.2"/><rect x="37.9" y="240.9" width="2.2" height="2.2"/><rect x="21.8" y="244.9" width="2.2" height="2.2"/><rect x="21.8" y="248.8" width="2.2" height="2.2"/><rect x="21.8" y="252.7" width="2.2" height="2.2"/><rect x="23.8" y="256.7" width="2.2" height="2.2"/><rect x="27.9" y="258.8" width="2.2" height="2.2"/><rect x="31.9" y="258.8" width="2.2" height="2.2"/></g><g fill="#dddddd"><path d="M57 232.3 V241.2 L52.6 245.9 L48 242.4 Z"/><path d="M47.3 243.6 L51.6 247.2 C52.6 251.5, 50.5 255.5, 46 257 C42.5 258.2, 38.5 257.6, 36.2 257.3 C39.2 255.5, 39.6 253, 40.2 250.5 C41 246.8, 43.8 244.2, 47.3 243.6 Z"/></g><g fill="none" stroke="#dddddd" stroke-width="3.1" stroke-linecap="round" stroke-linejoin="round"><path d="M29.5 283.7 V306.5 H43.9"/><path d="M33.2 289.6 H47.5 V313.4"/><path d="M21.6 289.6 H24.6"/><path d="M52.6 306.5 H55.6"/></g><g stroke-linecap="round"><path d="M42 347 L27.9 361.1" stroke="#dddddd" stroke-width="7.6" fill="none"/><path d="M41 348 L27.9 361.1" stroke="#535353" stroke-width="3.2" fill="none"/><path d="M44 345.5 L51.3 338.2" stroke="#dddddd" stroke-width="8.6" fill="none"/><rect x="-7.7" y="-3.3" width="15.4" height="6.6" fill="#dddddd" transform="translate(43.5 346) rotate(45)"/></g><g fill="#e4e4e4"><rect x="27.9" y="386.8" width="2.2" height="2.2"/><rect x="31.9" y="386.8" width="2.2" height="2.2"/><rect x="35.9" y="388.9" width="2.2" height="2.2"/><rect x="23.6" y="388.9" width="2.2" height="2.2"/><rect x="22.8" y="393.0" width="2.2" height="2.2"/><rect x="22.8" y="396.9" width="2.2" height="2.2"/><rect x="24.8" y="400.9" width="2.2" height="2.2"/></g><g transform="translate(40.65 401.5) rotate(-45)"><rect x="-16.3" y="-6.7" width="32.6" height="13.4" rx="2.4" fill="#dddddd"/><rect x="-6.6" y="-7" width="1.4" height="14" fill="#535353"/><rect x="5.2" y="-7" width="1.4" height="14" fill="#535353"/><circle cx="-2.1" cy="-4.2" r="1.15" fill="#535353"/><circle cx="-2.1" cy="0" r="1.15" fill="#535353"/><circle cx="-2.1" cy="4.2" r="1.15" fill="#535353"/><circle cx="2.1" cy="-4.2" r="1.15" fill="#535353"/><circle cx="2.1" cy="0" r="1.15" fill="#535353"/><circle cx="2.1" cy="4.2" r="1.15" fill="#535353"/></g><g fill="none" stroke="#dddddd" stroke-width="2.2" stroke-linejoin="round" stroke-linecap="round"><path d="M24 468.9 L27.2 459.6 L47.6 439.6 Q48.4 438.8 49.2 439.6 L54 444.2 Q54.8 445 54 445.8 L33.5 465.7 Z"/><path d="M27.2 459.6 L33.5 465.7"/><path d="M44.2 443 L50.4 449.2"/></g><g fill="#dddddd"><circle cx="39" cy="496.9" r="6.05"/><path d="M37.1 501 V506 C37.1 508 36.5 508.8 35 509.1 L28 510.9 Q25.9 511.4 25.9 513.4 V517 H52.1 V513.4 Q52.1 511.4 50 510.9 L43 509.1 C41.5 508.8 40.9 508 40.9 506 V501 Z"/><rect x="27" y="519" width="24.2" height="2.1"/></g><g fill="#e4e4e4"><rect x="49.9" y="555.9" width="2.2" height="2.2"/><rect x="49.9" y="559.9" width="2.2" height="2.2"/><rect x="47.8" y="563.9" width="2.2" height="2.2"/><rect x="43.8" y="567.9" width="2.2" height="2.2"/></g><g fill="#dddddd"><path d="M53.2 544 Q54.6 543.6 54.2 545.2 C52 551, 46 559, 41.2 563.2 L37 559 C41 554, 48 547, 53.2 544 Z"/><path d="M36.3 560.4 L40.4 564.2 C41.4 567.6, 39.6 571.4, 35.3 573 C32 574.1, 28.5 573.8, 26.1 573.5 C28.8 571.8, 29.2 569.6, 29.7 567.3 C30.4 563.8, 33 561, 36.3 560.4 Z"/><path d="M20.1 556 L32.1 556.1 L25.6 548.4 Z"/></g><path d="M29.2 552.6 C31.5 549, 36.5 547.2, 41.7 549.9" fill="none" stroke="#dddddd" stroke-width="1.6"/><path d="M44.1 597.1 L53.3 605.9 L41.25 617.95 L32.3 609 Z" fill="#dddddd"/><path d="M32.8 609.3 L25.8 616.4 Q25 617.2 25.8 618 L30.4 622.9 H54 M41 618 L36.2 622.9" fill="none" stroke="#dddddd" stroke-width="2.2"/><g fill="none" stroke="#dddddd" stroke-linejoin="round"><path d="M39.2 649.9 L50.4 660.9 L35.25 677 L23.6 664.75 Z" stroke-width="2.6"/><path d="M31.3 655 C29.6 651, 29.2 646.6, 31 645.7 C33 644.9, 35.2 648.8, 36.6 652.8 C37.6 655.4, 38.6 657.6, 39.4 659.2" stroke-width="2.1"/></g><circle cx="39.6" cy="659.6" r="2.7" fill="#dddddd"/><path d="M52.7 662 C55.5 664.4, 57.9 667.2, 57.9 669.8 A4.2 4.2 0 0 1 49.5 669.8 C49.5 666.8, 52.2 665.4, 52.7 662 Z" fill="#dddddd"/><path d="M35 698.9 H50.2 C51 699.5 51.3 700.3 51.5 701.2 C52.1 703 52.3 709 52.2 711.6 C52 713 51.6 714.2 51.1 715.2 C50.4 716.8 49.5 718 48.4 718.9 C47.3 719.9 46.2 720.6 45 721 C43.6 721.5 42 721.7 40.4 721.5 L35.6 726.5 C34.5 727.7 33.2 728.6 31.9 729 C30.6 729.4 29.2 729.4 28.2 729.1 C27 728.6 26.6 727.6 26.85 726.8 C27 726 27.2 725.5 27.6 725 C28.6 724.2 29.8 723.4 30.7 722.6 L31.8 720.3 C30.9 719 30.2 716.5 29.75 713.4 C29.3 711.5 28.9 710.2 28.8 709.1 C28.6 707.8 28.7 706.5 29.1 705.4 C29.6 704 30.3 703 31.3 702.1 C32.4 700.9 33.6 699.8 35 698.9 Z" fill="#dddddd"/><path d="M37.2 710.2 L31.1 718.9" stroke="#535353" stroke-width="1.2" fill="none"/><path d="M46.7 710.9 L40.2 721.2 L41.4 721.4 L46 716.2 Z" fill="#535353"/><circle cx="43.5" cy="761.3" r="10.5" fill="#dddddd"/><path d="M36.5 768.5 L25.7 779.4" stroke="#dddddd" stroke-width="3.3" stroke-linecap="round"/><rect x="-6.2" y="-2.6" width="12.4" height="5.2" rx="1.2" fill="#dddddd" transform="translate(47.94 810.19) rotate(44)"/><path d="M42.6 808.6 L31.9 814.2 L27.4 829.2 Q26.8 831.5 29.2 830.9 L44.2 825.2 L49.8 816" fill="none" stroke="#dddddd" stroke-width="2.4" stroke-linejoin="round"/><path d="M28.6 830 L38.5 819.7" stroke="#dddddd" stroke-width="2"/><circle cx="38.5" cy="819.7" r="2.6" fill="#dddddd"/><path d="M27.8 857.2 H52.3 Q53.1 857.2 53.1 858 V864.3 Q53.1 865.1 52.3 865.1 H50.8 Q50 865.1 50 864.3 V860.2 H43.1 V881 H46.5 Q48 881 48 882.5 Q48 884 46.5 884 H33.4 Q31.9 884 31.9 882.5 Q31.9 881 33.4 881 H37.9 V860.2 H30 V864.3 Q30 865.1 29.2 865.1 H27.8 Q27 865.1 27 864.3 V858 Q27 857.2 27.8 857.2 Z" fill="#dddddd"/><path d="M30 905.6 L50 923.4 V925.3 L41.6 925.4 L46 935.6 L42.6 937.3 L37.8 927 L30 934.2 Z" fill="#e6e6e6"/><path d="M32.2 909.8 L45.7 922.5 L38.7 922.9 L32.2 929.4 Z" fill="#060606"/><defs><pattern id="dp" width="4" height="4" patternUnits="userSpaceOnUse"><rect width="4" height="4" fill="#6c6c6c"/><rect x="1" y="1" width="1" height="1" fill="#8c8c8c"/><rect x="3" y="3" width="1" height="1" fill="#8c8c8c"/></pattern></defs><rect x="25.1" y="962.2" width="28.8" height="22.6" fill="url(#dp)" stroke="#dddddd" stroke-width="2.4"/><path d="M34.1 1014.4 a1.5 1.5 0 0 1 3 0 V1025 h1.9 V1012.4 a1.5 1.5 0 0 1 3 0 V1025 h2.25 V1014.4 a1.5 1.5 0 0 1 3 0 V1026 h2.25 V1019.2 a1.45 1.45 0 0 1 2.9 0 V1029 C52.4 1036 47.5 1041 42 1041 C37 1041 33.5 1038.5 31 1034.5 L25.5 1027.6 C24.3 1025.8 26 1023.8 27.8 1025 L34.1 1030.4 Z" fill="#dddddd"/><g fill="none" stroke="#dddddd" stroke-linecap="round"><circle cx="35.1" cy="1074.4" r="10.9" stroke-width="2.6"/><path d="M43.6 1083 L52.7 1091.7" stroke-width="4.4"/><path d="M32.5 1067.8 A7.1 7.1 0 0 1 41.4 1073" stroke-width="2.1"/></g><g fill="#dddddd"><circle cx="27.5" cy="1130.6" r="3.6"/><circle cx="39" cy="1130.6" r="3.6"/><circle cx="50.5" cy="1130.6" r="3.6"/></g><rect x="16" y="1175" width="14" height="14" fill="#dddddd"/><rect x="9.5" y="1168.4" width="15.2" height="15.2" fill="#535353"/><rect x="11" y="1169.9" width="12.2" height="12.2" fill="#0a0a0a" stroke="#dddddd" stroke-width="2"/><g fill="#dddddd"><path d="M44.2 1173.1 L50.2 1167.9 V1178.3 Z"/><path d="M58.9 1187.8 L53.6 1182 H64.3 Z"/></g><path d="M50 1173.1 H58.9 V1182.2" fill="none" stroke="#dddddd" stroke-width="2.4"/><rect x="28" y="1218" width="40" height="40" fill="#3a3a3a"/><rect x="30" y="1220" width="36" height="36" fill="#ffffff"/><rect x="8" y="1198" width="40" height="40" fill="#3a3a3a"/><rect x="10" y="1200" width="36" height="36" fill="#ffffff"/><rect x="12" y="1202" width="32" height="32" fill="#000000"/><rect x="23.1" y="1282.1" width="31.9" height="23.8" fill="none" stroke="#dddddd" stroke-width="2.2"/><g fill="#f4f4f4"><rect x="35.9" y="1284.9" width="2.2" height="2.2"/><rect x="39.9" y="1284.9" width="2.2" height="2.2"/><rect x="31.9" y="1286.9" width="2.2" height="2.2"/><rect x="43.9" y="1286.9" width="2.2" height="2.2"/><rect x="29.9" y="1290.9" width="2.2" height="2.2"/><rect x="45.9" y="1290.9" width="2.2" height="2.2"/><rect x="29.9" y="1294.9" width="2.2" height="2.2"/><rect x="45.9" y="1294.9" width="2.2" height="2.2"/><rect x="31.9" y="1298.9" width="2.2" height="2.2"/><rect x="43.9" y="1298.9" width="2.2" height="2.2"/><rect x="35.9" y="1300.9" width="2.2" height="2.2"/><rect x="39.9" y="1300.9" width="2.2" height="2.2"/></g><g stroke="#dddddd" stroke-width="2.2"><rect x="23.1" y="1339.2" width="21.7" height="17.6" fill="#535353"/><rect x="33.2" y="1333.2" width="21.8" height="17.6" fill="#535353"/></g><rect x="22" y="1338.1" width="23.9" height="3.9" fill="#dddddd"/><rect x="33.2" y="1333.2" width="21.8" height="17.6" fill="#535353" stroke="#dddddd" stroke-width="2.2"/><rect x="32.1" y="1332.1" width="24" height="3.9" fill="#dddddd"/></svg>
<svg style="left:2480px;top:8px" width="80" height="360" viewBox="2480 8 80 360"><g fill="none" stroke="#cfcfcf" stroke-width="1.5"><polyline points="2533.6,14.5 2529.7,19.1 2533.6,23.7"/><polyline points="2541.7,14.5 2537.9,19.1 2541.7,23.7"/></g><rect x="2498" y="38" width="2" height="8" fill="#424242"/><rect x="2502" y="38" width="2" height="8" fill="#424242"/><rect x="2506" y="38" width="2" height="8" fill="#424242"/><rect x="2510" y="38" width="2" height="8" fill="#424242"/><rect x="2514" y="38" width="2" height="8" fill="#424242"/><rect x="2518" y="38" width="2" height="8" fill="#424242"/><rect x="2522" y="38" width="2" height="8" fill="#424242"/><rect x="2526" y="38" width="2" height="8" fill="#424242"/><rect x="2530" y="38" width="2" height="8" fill="#424242"/><rect x="2534" y="38" width="2" height="8" fill="#424242"/><rect x="2498" y="120" width="2" height="8" fill="#424242"/><rect x="2502" y="120" width="2" height="8" fill="#424242"/><rect x="2506" y="120" width="2" height="8" fill="#424242"/><rect x="2510" y="120" width="2" height="8" fill="#424242"/><rect x="2514" y="120" width="2" height="8" fill="#424242"/><rect x="2518" y="120" width="2" height="8" fill="#424242"/><rect x="2522" y="120" width="2" height="8" fill="#424242"/><rect x="2526" y="120" width="2" height="8" fill="#424242"/><rect x="2530" y="120" width="2" height="8" fill="#424242"/><rect x="2534" y="120" width="2" height="8" fill="#424242"/><rect x="2498" y="202" width="2" height="8" fill="#424242"/><rect x="2502" y="202" width="2" height="8" fill="#424242"/><rect x="2506" y="202" width="2" height="8" fill="#424242"/><rect x="2510" y="202" width="2" height="8" fill="#424242"/><rect x="2514" y="202" width="2" height="8" fill="#424242"/><rect x="2518" y="202" width="2" height="8" fill="#424242"/><rect x="2522" y="202" width="2" height="8" fill="#424242"/><rect x="2526" y="202" width="2" height="8" fill="#424242"/><rect x="2530" y="202" width="2" height="8" fill="#424242"/><rect x="2534" y="202" width="2" height="8" fill="#424242"/><rect x="2498" y="284" width="2" height="8" fill="#424242"/><rect x="2502" y="284" width="2" height="8" fill="#424242"/><rect x="2506" y="284" width="2" height="8" fill="#424242"/><rect x="2510" y="284" width="2" height="8" fill="#424242"/><rect x="2514" y="284" width="2" height="8" fill="#424242"/><rect x="2518" y="284" width="2" height="8" fill="#424242"/><rect x="2522" y="284" width="2" height="8" fill="#424242"/><rect x="2526" y="284" width="2" height="8" fill="#424242"/><rect x="2530" y="284" width="2" height="8" fill="#424242"/><rect x="2534" y="284" width="2" height="8" fill="#424242"/><path d="M2513 63 L2521.5 67.6 L2513 72.6 L2504.3 67.6 Z" fill="#8e8e8e"/><path d="M2504.3 67.6 L2513 72.6 V82.8 L2504.3 78 Z" fill="#7c7c7c"/><g fill="none" stroke="#dddddd" stroke-width="1.5" stroke-linejoin="round"><path d="M2513 63.2 L2521.5 67.8 V78 L2513 82.8 L2504.4 78 V67.8 Z"/><path d="M2504.4 67.8 L2513 72.6 L2521.5 67.8 M2513 72.6 V82.8"/></g><rect x="2526" y="63" width="8" height="8" fill="#dddddd"/><rect x="2526" y="73" width="8" height="8" fill="#dddddd"/><rect x="2504" y="87" width="30" height="8" fill="#dddddd"/><path d="M2526.2 89.2 H2532 L2529.1 93 Z" fill="#424242"/><rect x="2500" y="145" width="4" height="4" fill="#dddddd"/><rect x="2506.2" y="145" width="7.8" height="2" fill="#dddddd"/><rect x="2500" y="151" width="4" height="4" fill="#dddddd"/><rect x="2506.2" y="151" width="7.8" height="2" fill="#dddddd"/><rect x="2500" y="157" width="4" height="4" fill="#dddddd"/><rect x="2506.2" y="157" width="7.8" height="2" fill="#dddddd"/><g fill="#dddddd"><path d="M2539.2 150.2 Q2540.8 149.8 2540.2 151.4 C2537.5 156.5 2531.5 163.5 2526.4 167.6 L2521.8 162.6 C2526 158 2534 152.5 2539.2 150.2 Z"/><path d="M2520.8 163.8 L2525.2 168.6 C2526.2 172.5 2524 175.8 2519.4 177.2 C2515.5 178.3 2510 177.6 2506.6 176.8 C2510 175.2 2511.4 173 2512.2 170.6 C2513.4 166.8 2516.6 164.2 2520.8 163.8 Z"/></g><text x="2504.9" y="254.4" font-size="34.8" fill="#dddddd">A</text><rect x="2531" y="226.3" width="2" height="33.5" fill="#dddddd"/><defs><pattern id="bp2" width="5" height="5" patternUnits="userSpaceOnUse"><rect width="5" height="5" fill="#363636"/><rect x="1" y="1" width="1" height="1" fill="#434343"/><rect x="3.5" y="3.5" width="1" height="1" fill="#434343"/></pattern></defs><rect x="2489" y="300.5" width="56" height="47" rx="5" fill="url(#bp2)" stroke="#636363" stroke-width="1.5"/><g fill="#dddddd"><rect x="2510.2" y="302" width="3" height="46"/><rect x="2525" y="302" width="3" height="46"/><rect x="2496" y="316" width="46.2" height="3.1"/><rect x="2496" y="330.9" width="46.2" height="3.1"/></g></svg>
<div style="left:1968px;top:272px;width:508px;height:782px;background:#535353;box-shadow:0 1px 7px rgba(0,0,0,0.24);clip-path:inset(-20px 0px -20px -20px);"></div>
<div style="left:1968px;top:272px;width:508px;height:8px;background:#363636;"></div>
<svg style="left:1968px;top:274px" width="508" height="4"><line x1="0" y1="1" x2="508" y2="1" stroke="#2a2a2a" stroke-width="2" stroke-dasharray="2 2"/><line x1="2" y1="3" x2="508" y2="3" stroke="#2a2a2a" stroke-width="2" stroke-dasharray="2 2"/></svg>
<div style="left:2180px;top:280px;width:296px;height:32px;background:#424242;"></div>
<div style="left:2180px;top:312px;width:296px;height:2px;background:#3a3a3a;"></div>
<div style="left:2180px;top:280px;width:2px;height:32px;background:#3f3f3f;"></div>
<div style="left:1968px;top:280px;width:2px;height:774px;background:#3c3c3c;"></div>
<div class="t" style="left:1984px;top:287px;font-size:20px;font-weight:bold;color:#f2f2f2;letter-spacing:0.76px" id="ptitle">Composition Grid</div>
<svg style="left:2390px;top:282px" width="84" height="30" viewBox="2390 282 84 30" fill="none" stroke="#d0d0d0" stroke-width="1.6"><polyline points="2396.5,291 2403,297 2396.5,303"/><polyline points="2405.5,291 2412,297 2405.5,303"/><rect x="2428" y="286" width="2" height="22" fill="#b0b0b0" stroke="none"/><g fill="#c4c4c4" stroke="none"><rect x="2444" y="290" width="20" height="2"/><rect x="2444" y="294" width="20" height="2"/><rect x="2444" y="298" width="20" height="2"/><rect x="2444" y="302" width="20" height="2"/></g></svg>
<div style="left:2476px;top:272px;width:2px;height:8px;background:#363636;"></div>
<div style="left:2476px;top:280px;width:4px;height:774px;background:#3b3b3b;"></div>
<div style="left:1996px;top:351px;width:28px;height:29px;background:#0394ff;border-radius:5px;"></div>
<svg style="left:1996px;top:351px" width="28" height="29" viewBox="0 0 28 29"><polyline points="7.5,16 11.8,20.5 20.5,8" fill="none" stroke="#fff" stroke-width="4"/></svg>
<div class="t lab" style="left:2041px;top:350px;font-size:29px;color:#c9c9c9;text-decoration:underline;text-decoration-thickness:2px;text-underline-offset:2.25px;-webkit-text-stroke:0.35px #c9c9c9;">Rule of thirds</div>
<div style="left:2046px;top:398px;width:124px;height:38px;background:#414141;border:2px solid #2a2a2a;border-radius:10px;"></div>
<div class="t sel" style="left:2068px;top:403px;font-size:24.5px;color:#dedede;-webkit-text-stroke:0.4px #dedede;">Red</div>
<svg style="left:2146px;top:404px" width="18" height="26" viewBox="0 0 18 26" fill="#d8d8d8"><path d="M2.8 10.6 L8.4 1.8 L14 10.6 Z"/><path d="M2.8 15 L14 15 L8.4 23.8 Z"/></svg>
<div style="left:2220px;top:392px;width:76px;height:50px;background:#424242;border:2px solid #2c2c2c;"></div>
<div class="t" style="left:2232px;top:404px;font-size:24.5px;color:#dedede;-webkit-text-stroke:0.4px #dedede;">6</div>
<div class="t" style="left:2303px;top:404px;font-size:24.5px;color:#d4d4d4;-webkit-text-stroke:0.4px #d4d4d4;">px</div>
<div style="left:1996px;top:493px;width:28px;height:29px;background:#0394ff;border-radius:5px;"></div>
<svg style="left:1996px;top:493px" width="28" height="29" viewBox="0 0 28 29"><polyline points="7.5,16 11.8,20.5 20.5,8" fill="none" stroke="#fff" stroke-width="4"/></svg>
<div class="t lab" style="left:2041px;top:492px;font-size:29px;color:#c9c9c9;text-decoration:underline;text-decoration-thickness:2px;text-underline-offset:2.25px;-webkit-text-stroke:0.35px #c9c9c9;">Golden ratio</div>
<div style="left:2046px;top:540px;width:124px;height:38px;background:#414141;border:2px solid #2a2a2a;border-radius:10px;"></div>
<div class="t sel" style="left:2068px;top:545px;font-size:24.5px;color:#dedede;-webkit-text-stroke:0.4px #dedede;">Green</div>
<svg style="left:2146px;top:546px" width="18" height="26" viewBox="0 0 18 26" fill="#d8d8d8"><path d="M2.8 10.6 L8.4 1.8 L14 10.6 Z"/><path d="M2.8 15 L14 15 L8.4 23.8 Z"/></svg>
<div style="left:2220px;top:534px;width:76px;height:50px;background:#424242;border:2px solid #2c2c2c;"></div>
<div class="t" style="left:2232px;top:546px;font-size:24.5px;color:#dedede;-webkit-text-stroke:0.4px #dedede;">6</div>
<div class="t" style="left:2303px;top:546px;font-size:24.5px;color:#d4d4d4;-webkit-text-stroke:0.4px #d4d4d4;">px</div>
<div style="left:1996px;top:635px;width:28px;height:29px;background:#0394ff;border-radius:5px;"></div>
<svg style="left:1996px;top:635px" width="28" height="29" viewBox="0 0 28 29"><polyline points="7.5,16 11.8,20.5 20.5,8" fill="none" stroke="#fff" stroke-width="4"/></svg>
<div class="t lab" style="left:2041px;top:634px;font-size:29px;color:#c9c9c9;text-decoration:underline;text-decoration-thickness:2px;text-underline-offset:2.25px;-webkit-text-stroke:0.35px #c9c9c9;">Dynamic symmetry</div>
<div style="left:2046px;top:682px;width:124px;height:38px;background:#414141;border:2px solid #2a2a2a;border-radius:10px;"></div>
<div class="t sel" style="left:2068px;top:687px;font-size:24.5px;color:#dedede;-webkit-text-stroke:0.4px #dedede;">Blue</div>
<svg style="left:2146px;top:688px" width="18" height="26" viewBox="0 0 18 26" fill="#d8d8d8"><path d="M2.8 10.6 L8.4 1.8 L14 10.6 Z"/><path d="M2.8 15 L14 15 L8.4 23.8 Z"/></svg>
<div style="left:2220px;top:676px;width:76px;height:50px;background:#424242;border:2px solid #2c2c2c;"></div>
<div class="t" style="left:2232px;top:688px;font-size:24.5px;color:#dedede;-webkit-text-stroke:0.4px #dedede;">3</div>
<div class="t" style="left:2303px;top:688px;font-size:24.5px;color:#d4d4d4;-webkit-text-stroke:0.4px #d4d4d4;">px</div>
<div style="left:2010px;top:810px;width:426px;height:85px;background:#6a6a6a;border:2px solid #2e2e2e;border-radius:43px;"></div>
<div class="t" id="ubtn" style="left:2010px;top:840px;width:426px;text-align:center;font-size:24px;color:#e2e2e2;-webkit-text-stroke:0.3px #e2e2e2;">update grid</div>
<div style="left:1968px;top:978px;width:508px;height:2px;background:#1b1b1b;"></div>
<div style="left:1970px;top:980px;width:506px;height:72px;background:#424242;"></div>
<div style="left:1968px;top:1052px;width:508px;height:2px;background:#3a3a3a;"></div>
<div class="t" id="foot" style="left:2090px;top:1005px;font-size:20px;color:#d6d6d6;white-space:pre;-webkit-text-stroke:0.25px #d6d6d6;">Version 1.0   |   © Manfred Gruber</div>
<svg style="left:96px;top:20px" width="16" height="16" viewBox="0 0 16 16"><path d="M2.2 2.6 L13.8 13.6 M13.8 2.6 L2.2 13.6" stroke="#a4a4a4" stroke-width="2.3" fill="none"/></svg>
<div class="t" id="tabtitle" style="left:130px;top:16px;font-size:23px;font-weight:bold;color:#f4f4f4;letter-spacing:0.39px;">Composition Grid.tif @ 130% (Dynamic symmetry, RGB/8) *</div>
<div class="t" id="zoomtxt" style="left:114.6px;top:1411.6px;font-size:20.5px;color:#e0e0e0;">130%</div>
<div class="t" id="doctxt" style="left:285px;top:1412px;font-size:20px;color:#d2d2d2;letter-spacing:0.6px;">Doc: 4,12M/9,61M</div>
<svg style="left:547.5px;top:1412px" width="14" height="22" viewBox="0 0 14 22"><polyline points="4,3.5 9.6,12 4,20.5" fill="none" stroke="#d0d0d0" stroke-width="1.8"/></svg>
</body></html>
